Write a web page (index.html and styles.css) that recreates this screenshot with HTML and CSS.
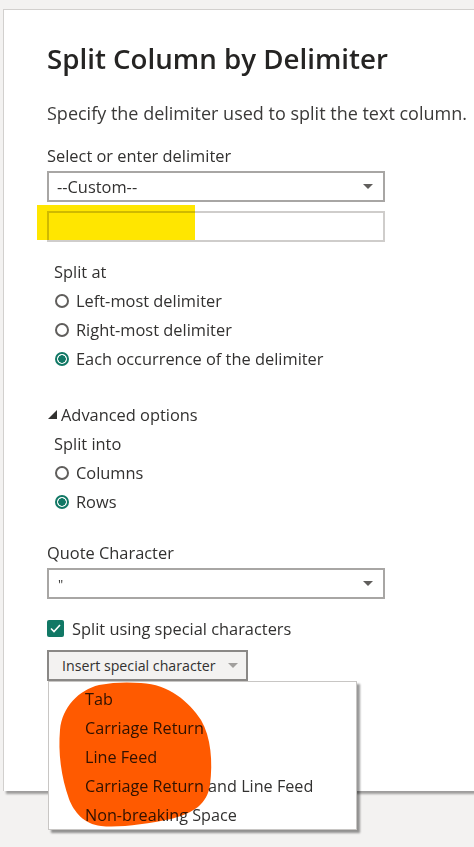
FILE: index.html
```html
<!DOCTYPE html>
<html lang="en">
<head>
<meta charset="utf-8">
<title>Split Column by Delimiter</title>
<link rel="stylesheet" href="styles.css">
</head>
<body>
<div class="panel">
  <h1 class="title">Split Column by Delimiter</h1>
  <p class="subtitle">Specify the delimiter used to split the text column.</p>
  <div class="label first">Select or enter delimiter</div>
  <div class="select"><span>--Custom--</span><svg class="caret" width="10" height="6" viewBox="0 0 10 6"><path d="M0 0H10L5 5Z" fill="#605e5c"/></svg></div>
  <div class="input-wrap">
    <div class="input"></div>
    <div class="highlight"></div>
  </div>

  <div class="group split-at">
    <div class="line">Split at</div>
    <div class="line radio"><span class="rb"></span>Left-most delimiter</div>
    <div class="line radio"><span class="rb"></span>Right-most delimiter</div>
    <div class="line radio"><span class="rb on"></span>Each occurrence of the delimiter</div>
  </div>

  <div class="line advanced"><svg class="tri" width="9" height="9" viewBox="0 0 9 9"><path d="M9 0V9H0Z" fill="#323130"/></svg>Advanced options</div>
  <div class="group">
    <div class="line">Split into</div>
    <div class="line radio"><span class="rb"></span>Columns</div>
    <div class="line radio"><span class="rb on"></span>Rows</div>
  </div>

  <div class="label quote-label">Quote Character</div>
  <div class="select"><span class="quote">"</span><svg class="caret" width="10" height="6" viewBox="0 0 10 6"><path d="M0 0H10L5 5Z" fill="#605e5c"/></svg></div>

  <div class="line check-row"><span class="cb"><svg width="11" height="9" viewBox="0 0 11 9"><path d="M1 4.5L4 7.5L10 1" fill="none" stroke="#fff" stroke-width="1.6"/></svg></span>Split using special characters</div>

  <div class="insert-wrap">
    <div class="insert-btn">Insert special character<svg class="caret light" width="10" height="6" viewBox="0 0 10 6"><path d="M0 0H10L5 5Z" fill="#a19f9d"/></svg></div>
    <div class="menu">
      <div class="item">Tab</div>
      <div class="item">Carriage Return</div>
      <div class="item">Line Feed</div>
      <div class="item">Carriage Return and Line Feed</div>
      <div class="item">Non-breaking Space</div>
      <svg class="blob" width="170" height="148" viewBox="0 0 170 148"><path d="M92,1 C120,2 140,20 152,38 C162,55 164,80 161,103 C158,122 145,131 122,137 C97,142 70,146 52,144 C35,142 25,130 20,117 C12,95 9,70 11,48 C13,25 30,8 50,3 C65,0 80,0 92,1 Z" fill="#ff5a00"/></svg>
    </div>
  </div>
</div>
</body>
</html>
```

FILE: styles.css
```css
html, body {
  margin: 0;
  padding: 0;
}
body {
  background: #f3f2f1;
  font-family: "Open Sans", "Noto Sans", sans-serif;
  color: #323130;
  height: 847px;
  overflow: hidden;
}
.panel {
  margin-top: 9px;
  margin-left: 3px;
  height: 782px;
  box-sizing: border-box;
  background: #fff;
  border-top: 1px solid #d2d0ce;
  border-left: 1px solid #d2d0ce;
  box-shadow: 3px 3px 2px rgba(0, 0, 0, 0.35);
  padding: 30px 0 0 43px;
  font-size: 16.4px;
}
.title {
  margin: 0;
  font-size: 27.7px;
  font-weight: 600;
  line-height: 36px;
  color: #252423;
}
.subtitle {
  margin: 25px 0 0 0;
  font-size: 18px;
  line-height: 24px;
  color: #3b3a39;
  white-space: nowrap;
}
.label {
  line-height: 24px;
  font-size: 16.4px;
}
.label.first {
  margin-top: 19px;
}
.select {
  margin-top: 3px;
  width: 338px;
  height: 31px;
  box-sizing: border-box;
  border: 2px solid #a8a6a4;
  display: flex;
  align-items: center;
  justify-content: space-between;
  padding: 0 10px 0 8px;
  font-size: 16.4px;
}
.caret {
  display: block;
}
.quote {
  font-size: 13px;
  padding-left: 1px;
}
.input-wrap {
  position: relative;
  margin-top: 9px;
  width: 338px;
  height: 31px;
}
.input {
  height: 31px;
  box-sizing: border-box;
  border: 2px solid #cfcdcb;
}
.highlight {
  position: absolute;
  left: -10px;
  top: -6px;
  width: 158px;
  height: 35px;
  background: #ffe600;
  mix-blend-mode: multiply;
}
.line {
  line-height: 29px;
  height: 29px;
  font-size: 16.4px;
  display: flex;
  align-items: center;
  white-space: nowrap;
}
.group {
  padding-left: 7px;
}
.split-at {
  margin-top: 15px;
}
.radio .rb {
  width: 14px;
  height: 14px;
  box-sizing: border-box;
  border: 2px solid #605e5c;
  border-radius: 50%;
  margin: 0 7px 0 1px;
  flex: none;
}
.radio .rb.on {
  border-color: #117865;
  background: radial-gradient(circle, #117865 0 3.5px, #fff 4px);
}
.advanced {
  margin-top: 27px;
}
.tri {
  margin-right: 4px;
  margin-left: 1px;
}
.quote-label {
  margin-top: 25px;
}
.check-row {
  margin-top: 15px;
}
.cb {
  width: 17px;
  height: 17px;
  border-radius: 2px;
  background: #117865;
  display: flex;
  align-items: center;
  justify-content: center;
  margin-right: 8px;
  flex: none;
}
.insert-wrap {
  position: relative;
  margin-top: 7px;
}
.insert-btn {
  width: 201px;
  height: 31px;
  box-sizing: border-box;
  border: 2px solid #8a8886;
  background: #f3f2f1;
  display: flex;
  align-items: center;
  padding-left: 13px;
  font-size: 14.2px;
  white-space: nowrap;
}
.insert-btn .caret {
  margin-left: 12px;
}
.menu {
  position: absolute;
  left: 1px;
  top: 31px;
  width: 309px;
  height: 149px;
  box-sizing: border-box;
  background: #fff;
  border: 1px solid #c8c6c4;
  box-shadow: 3px 3px 2px rgba(0, 0, 0, 0.4);
  padding-top: 3px;
}
.item {
  height: 29px;
  line-height: 29px;
  padding-left: 36px;
  font-size: 16.2px;
  white-space: nowrap;
}
.blob {
  position: absolute;
  left: 0;
  top: 0;
  mix-blend-mode: multiply;
}
```
